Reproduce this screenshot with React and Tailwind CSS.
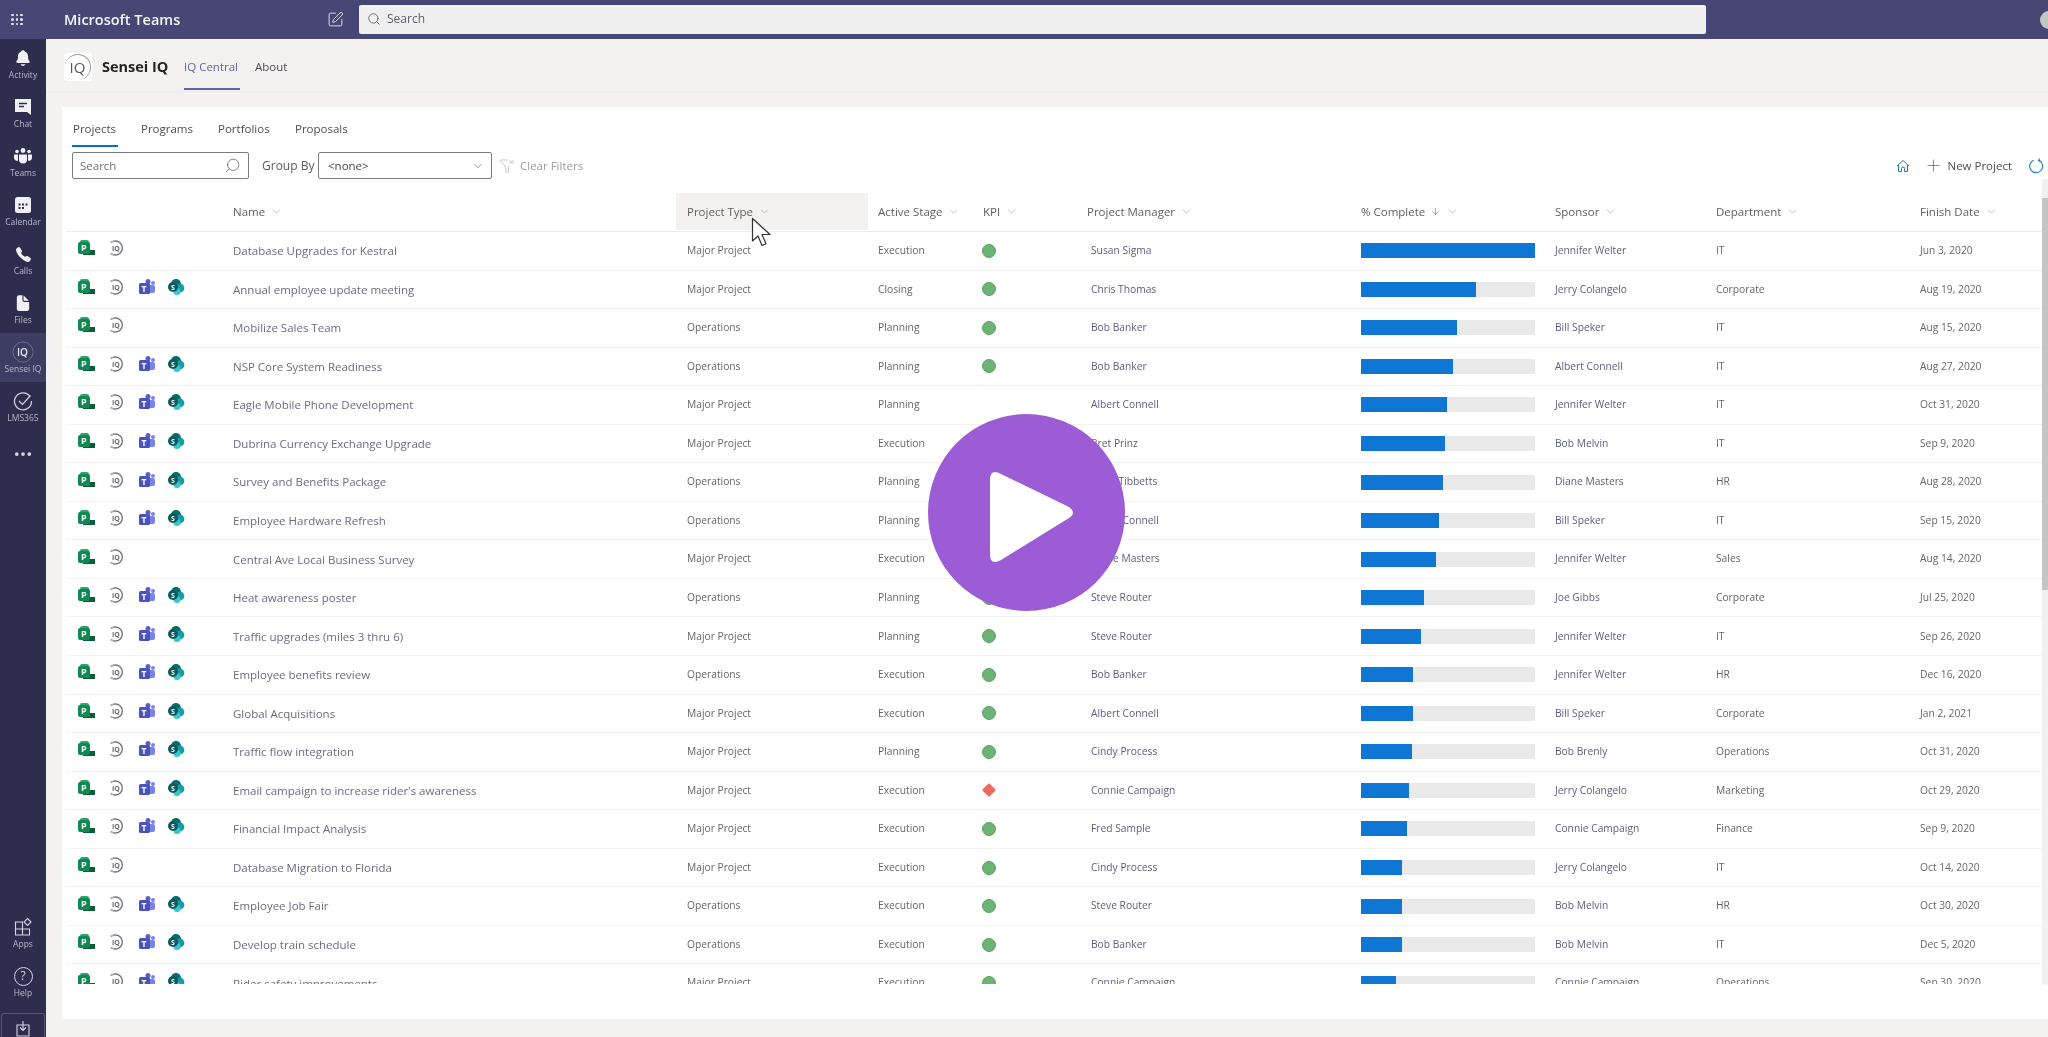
import { Search, ChevronDown, Plus, SquarePen, FilterX, ArrowDown } from "lucide-react";
import { IoNotifications, IoCall, IoDocument, IoEllipsisHorizontal } from "react-icons/io5";

const COLS = "grid grid-cols-[159px_454px_191px_105px_104px_274px_194px_161px_204px_130px]";

const ROWS = [
  ["Database Upgrades for Kestral", "Major Project", "Execution", "g", "Susan Sigma", 133, "Jennifer Welter", "IT", "Jun 3, 2020", false],
  ["Annual employee update meeting", "Major Project", "Closing", "g", "Chris Thomas", 88, "Jerry Colangelo", "Corporate", "Aug 19, 2020", true],
  ["Mobilize Sales Team", "Operations", "Planning", "g", "Bob Banker", 73, "Bill Speker", "IT", "Aug 15, 2020", false],
  ["NSP Core System Readiness", "Operations", "Planning", "g", "Bob Banker", 70, "Albert Connell", "IT", "Aug 27, 2020", true],
  ["Eagle Mobile Phone Development", "Major Project", "Planning", "", "Albert Connell", 66, "Jennifer Welter", "IT", "Oct 31, 2020", true],
  ["Dubrina Currency Exchange Upgrade", "Major Project", "Execution", "g", "Bret Prinz", 64, "Bob Melvin", "IT", "Sep 9, 2020", true],
  ["Survey and Benefits Package", "Operations", "Planning", "g", "Terry Tibbetts", 63, "Diane Masters", "HR", "Aug 28, 2020", true],
  ["Employee Hardware Refresh", "Operations", "Planning", "g", "Albert Connell", 60, "Bill Speker", "IT", "Sep 15, 2020", true],
  ["Central Ave Local Business Survey", "Major Project", "Execution", "g", "Diane Masters", 57, "Jennifer Welter", "Sales", "Aug 14, 2020", false],
  ["Heat awareness poster", "Operations", "Planning", "g", "Steve Router", 48, "Joe Gibbs", "Corporate", "Jul 25, 2020", true],
  ["Traffic upgrades (miles 3 thru 6)", "Major Project", "Planning", "g", "Steve Router", 46, "Jennifer Welter", "IT", "Sep 26, 2020", true],
  ["Employee benefits review", "Operations", "Execution", "g", "Bob Banker", 40, "Jennifer Welter", "HR", "Dec 16, 2020", true],
  ["Global Acquisitions", "Major Project", "Execution", "g", "Albert Connell", 40, "Bill Speker", "Corporate", "Jan 2, 2021", true],
  ["Traffic flow integration", "Major Project", "Planning", "g", "Cindy Process", 39, "Bob Brenly", "Operations", "Oct 31, 2020", true],
  ["Email campaign to increase rider's awareness", "Major Project", "Execution", "r", "Connie Campaign", 37, "Jerry Colangelo", "Marketing", "Oct 29, 2020", true],
  ["Financial Impact Analysis", "Major Project", "Execution", "g", "Fred Sample", 35, "Connie Campaign", "Finance", "Sep 9, 2020", true],
  ["Database Migration to Florida", "Major Project", "Execution", "g", "Cindy Process", 31, "Jerry Colangelo", "IT", "Oct 14, 2020", false],
  ["Employee Job Fair", "Operations", "Execution", "g", "Steve Router", 31, "Bob Melvin", "HR", "Oct 30, 2020", true],
  ["Develop train schedule", "Operations", "Execution", "g", "Bob Banker", 31, "Bob Melvin", "IT", "Dec 5, 2020", true],
  ["Rider safety improvements", "Major Project", "Execution", "g", "Connie Campaign", 27, "Connie Campaign", "Operations", "Sep 30, 2020", true],
];

function ProjectIcon() {
  return (
    <svg width="18" height="18" viewBox="0 0 18 18">
      <rect x="6" y="11" width="12" height="5" fill="#0b5c3a" />
      <rect x="3" y="1" width="9" height="4" rx="2" fill="#2fa36b" />
      <rect x="1" y="3" width="12" height="12" rx="2" fill="#0f8a53" />
      <text x="4" y="12" fontSize="9" fontWeight="700" fill="#fff" fontFamily="Open Sans, sans-serif">P</text>
    </svg>
  );
}

function IqIcon() {
  return (
    <svg width="16" height="18" viewBox="0 0 16 18" fill="none">
      <path d="M3 3.5 A7 7 0 1 1 3 14.5" stroke="#77757f" strokeWidth="1.4" />
      <path d="M2 3 L6 2 M2 15 L6 16" stroke="#b5b3bb" strokeWidth="1" />
      <text x="4" y="12" fontSize="7" fontWeight="700" fill="#6a6872" fontFamily="Open Sans, sans-serif">IQ</text>
    </svg>
  );
}

function TeamsIcon() {
  return (
    <svg width="18" height="18" viewBox="0 0 18 18">
      <circle cx="10" cy="3.5" r="2.5" fill="#5b5fc7" />
      <circle cx="15" cy="5" r="2" fill="#7b83eb" />
      <rect x="10" y="7" width="7" height="8" rx="2" fill="#7b83eb" />
      <rect x="1" y="5" width="11" height="11" rx="1.5" fill="#4b53bc" />
      <text x="3.6" y="13.5" fontSize="8.5" fontWeight="700" fill="#fff" fontFamily="Open Sans, sans-serif">T</text>
    </svg>
  );
}

function SharePointIcon() {
  return (
    <svg width="18" height="18" viewBox="0 0 18 18">
      <circle cx="9" cy="6" r="5" fill="#036c70" />
      <circle cx="13" cy="10" r="4.4" fill="#1a9ba1" />
      <circle cx="10" cy="13.5" r="3.6" fill="#37c6d0" />
      <circle cx="6" cy="9" r="5" fill="#0b5a5e" />
      <text x="4" y="12" fontSize="7" fontWeight="700" fill="#fff" fontFamily="Open Sans, sans-serif">S</text>
    </svg>
  );
}

function ChatIcon() {
  return (
    <svg width="18" height="18" viewBox="0 0 18 18">
      <path d="M1 1h16v16l-4-3H1z" fill="#f1f0f5" />
      <path d="M5 5.5h8M5 8.5h5" stroke="#2f2e4f" strokeWidth="1.3" />
    </svg>
  );
}

function TeamsNavIcon() {
  return (
    <svg width="20" height="18" viewBox="0 0 20 18" fill="#f1f0f5">
      <circle cx="10" cy="3.5" r="2.4" />
      <circle cx="4" cy="4.5" r="1.8" />
      <circle cx="16" cy="4.5" r="1.8" />
      <path d="M6 7.5h8v5a4 4 0 0 1-8 0z" />
      <path d="M1 7.5h4v5l-.5 1.5C2.5 14 1 12.5 1 10.5zM15 7.5h4v3c0 2-1.5 3.5-3.5 3.5L15 12.5z" />
    </svg>
  );
}

function CalendarIcon() {
  return (
    <svg width="18" height="18" viewBox="0 0 18 18">
      <rect x="1" y="1" width="16" height="16" rx="2.5" fill="#f1f0f5" />
      <path d="M4.5 7.5h2v2h-2zM8 7.5h2v2H8zM11.5 7.5h2v2h-2zM4.5 11h2v2h-2zM8 11h2v2H8z" fill="#2f2e4f" />
    </svg>
  );
}

function CircleIq({ size = 22 }) {
  return (
    <svg width={size} height={size} viewBox="0 0 24 24" fill="none">
      <circle cx="12" cy="12" r="11" stroke="#6f6e92" strokeWidth="1" />
      <text x="5.5" y="16" fontSize="11" fontWeight="600" fill="#e8e7f0" fontFamily="Open Sans, sans-serif">IQ</text>
    </svg>
  );
}

function LmsIcon() {
  return (
    <svg width="20" height="20" viewBox="0 0 20 20" fill="none" stroke="#d6d5e2" strokeWidth="1.2">
      <path d="M17 5.5A8.5 8.5 0 1 0 18.5 10" />
      <path d="M6 10l3.5 3.5L17.5 4.5" />
    </svg>
  );
}

function AppsIcon() {
  return (
    <svg width="20" height="20" viewBox="0 0 20 20" fill="none" stroke="#d6d5e2" strokeWidth="1.1">
      <path d="M2.5 5h7v7h-7zM2.5 12h7v6h-7zM9.5 12h7v6h-7z" />
      <path d="M14.5 1.5l3.5 3.5-3.5 3.5L11 5z" />
    </svg>
  );
}

function HomeIcon() {
  return (
    <svg width="14" height="14" viewBox="0 0 14 14" fill="none" stroke="#1b7fc4" strokeWidth="1">
      <path d="M1 7l6-5.5L13 7M2.500 6v6.500h3V9.500a1.500 1.500 0 0 1 3 0v3h3V6" />
    </svg>
  );
}

function RefreshIcon() {
  return (
    <svg width="16" height="16" viewBox="0 0 16 16" fill="none" stroke="#1b7fc4" strokeWidth="1.1">
      <path d="M5.500 2.200A6.500 6.500 0 1 0 11 2.300" />
      <path d="M11.500 0.500L10.500 2.500L12.500 3.500" />
    </svg>
  );
}

function NavItem({ icon, label, active }) {
  return (
    <div className={`h-[49px] flex flex-col items-center justify-center ${active ? "bg-[#3d3c63]" : ""}`}>
      <div className="h-[22px] flex items-center justify-center text-[#f1f0f5]">{icon}</div>
      <span className="text-[8.5px] leading-[11px] text-[#b9b8cc] whitespace-nowrap">{label}</span>
    </div>
  );
}

function Sidebar() {
  return (
    <aside className="w-[46px] shrink-0 bg-[#2e2d4d] flex flex-col overflow-hidden">
      <NavItem icon={<IoNotifications size={18} />} label="Activity" />
      <NavItem icon={<ChatIcon />} label="Chat" />
      <NavItem icon={<TeamsNavIcon />} label="Teams" />
      <NavItem icon={<CalendarIcon />} label="Calendar" />
      <NavItem icon={<IoCall size={17} />} label="Calls" />
      <NavItem icon={<IoDocument size={18} />} label="Files" />
      <NavItem icon={<CircleIq />} label="Sensei IQ" active />
      <NavItem icon={<LmsIcon />} label="LMS365" />
      <div className="h-[34px] mt-[6px] flex items-center justify-center text-[#d6d5e2]">
        <IoEllipsisHorizontal size={20} />
      </div>
      <div className="mt-auto flex flex-col">
        <NavItem icon={<AppsIcon />} label="Apps" />
        <NavItem
          icon={
            <span className="w-[19px] h-[19px] rounded-full border border-[#d6d5e2] flex items-center justify-center text-[12px] text-[#d6d5e2]">?</span>
          }
          label="Help"
        />
        <div className="h-[24px] mt-[7px] mx-[1px] border border-b-0 border-[#55547a] rounded-t-[3px] flex justify-center pt-[6px]">
          <svg width="16" height="18" viewBox="0 0 16 18" fill="none" stroke="#d6d5e2" strokeWidth="1.1">
            <path d="M2 5h12v11H2zM8 1v9M5 7.5L8 10.5L11 7.5" />
          </svg>
        </div>
      </div>
    </aside>
  );
}

function TopBar() {
  return (
    <header className="h-[39px] shrink-0 bg-[#464775] flex items-center">
      <div className="w-[64px] flex justify-center pr-[30px] shrink-0">
        <div className="grid grid-cols-3 gap-[2px]">
          {[0, 1, 2, 3, 4, 5, 6, 7, 8].map((i) => (
            <span key={i} className="w-[2.5px] h-[2.5px] rounded-full bg-[#e6e5f0]" />
          ))}
        </div>
      </div>
      <span className="w-[263px] text-[14.5px] font-semibold text-[#f5f5fa] shrink-0">Microsoft Teams</span>
      <SquarePen size={17} strokeWidth={1.4} className="text-[#dcdbe8] shrink-0" />
      <div className="ml-[15px] w-[1347px] h-[29px] bg-[#f0f0f0] rounded-[2px] flex items-center pl-[8px] gap-[6px] text-[#5f5f68] text-[12px] shrink-0 mt-[-1px]">
        <Search size={14} strokeWidth={1.5} />
        Search
      </div>
      <span className="ml-auto mr-[-10px] w-[18px] h-[18px] rounded-full bg-[#c5c6c4] shrink-0" />
    </header>
  );
}

function AppHeader() {
  return (
    <div className="h-[53px] shrink-0 flex items-center pl-[18px] pt-[3px] border-b border-[#ebeae9]">
      <div className="w-[28px] h-[28px] bg-white flex items-center justify-center rounded-[3px] shrink-0">
        <span className="w-[26px] h-[26px] rounded-full border-r border-t border-[#9a9a9a] flex items-center justify-center text-[15px] text-[#55555f]">IQ</span>
      </div>
      <span className="ml-[10px] text-[14.5px] font-bold text-[#242424] w-[82px]">Sensei IQ</span>
      <div className="h-full relative flex items-center text-[11.5px] text-[#6264a7] w-[56px]">
        IQ Central
        <span className="absolute left-0 right-0 bottom-[1px] h-[2px] bg-[#6264a7]" />
      </div>
      <span className="ml-[15px] text-[11.5px] text-[#4a4a55]">About</span>
    </div>
  );
}

function Tabs() {
  const tabs = [
    ["Projects", "w-[68px]"],
    ["Programs", "w-[77px]"],
    ["Portfolios", "w-[77px]"],
    ["Proposals", "w-[70px]"],
  ];
  return (
    <div className="h-[40px] flex pl-[11px] shrink-0">
      {tabs.map(([t, w], i) => (
        <div key={t} className={`${w} relative pt-[14px] text-[11.5px] leading-[16px] text-[#4f4f4f]`}>
          {t}
          {i === 0 && <span className="absolute left-[-1px] w-[46px] bottom-0 h-[2px] bg-[#0f6cbd]" />}
        </div>
      ))}
    </div>
  );
}

function Toolbar() {
  return (
    <div className="h-[27px] mt-[5px] flex items-center pl-[10px] shrink-0">
      <div className="w-[177px] h-[27px] border border-[#7c7c7c] rounded-[2px] flex items-center justify-between px-[7px] text-[11.5px] text-[#707070]">
        Search
        <Search size={17} strokeWidth={1} className="-scale-x-100 text-[#555]" />
      </div>
      <span className="ml-[13px] w-[56px] text-[12px] font-medium text-[#5a5a5a] whitespace-nowrap">Group By</span>
      <div className="w-[174px] h-[27px] border border-[#7c7c7c] rounded-[2px] flex items-center justify-between pl-[9px] pr-[6px] text-[11.5px] text-[#444]">
        {"<none>"}
        <ChevronDown size={14} strokeWidth={1.1} className="text-[#666]" />
      </div>
      <FilterX size={16} strokeWidth={1} className="ml-[7px] text-[#a9a9a9]" />
      <span className="ml-[5px] text-[11.5px] text-[#9a9a9a]">Clear Filters</span>
      <div className="ml-auto flex items-center pr-[4px]">
        <HomeIcon />
        <Plus size={19} strokeWidth={1} className="ml-[14px] text-[#1b7fc4]" />
        <span className="ml-[4px] text-[11.5px] text-[#4f4f4f] whitespace-nowrap">New Project</span>
        <span className="ml-[16px] flex"><RefreshIcon /></span>
      </div>
    </div>
  );
}

function HeadCell({ children, hover, sort }) {
  return (
    <div className={`h-[37px] flex items-center gap-[5px] text-[11.5px] font-medium text-[#5f5f5f] whitespace-nowrap ${hover ? "bg-[#f3f2f1] mr-[2px] ml-[-3px] pl-[11px]" : "pl-[8px]"}`}>
      {children}
      {sort && <ArrowDown size={11} strokeWidth={1.2} />}
      <ChevronDown size={13} strokeWidth={1} className="text-[#8f8f8f]" />
    </div>
  );
}

function TableHead() {
  return (
    <div className={`${COLS} ml-[4px] mt-[14px] h-[39px] border-b border-[#edebe9] shrink-0`}>
      <div />
      <HeadCell>Name</HeadCell>
      <HeadCell hover>Project Type</HeadCell>
      <HeadCell>Active Stage</HeadCell>
      <HeadCell>KPI</HeadCell>
      <HeadCell>Project Manager</HeadCell>
      <HeadCell sort>% Complete</HeadCell>
      <HeadCell>Sponsor</HeadCell>
      <HeadCell>Department</HeadCell>
      <HeadCell>Finish Date</HeadCell>
    </div>
  );
}

function Row({ row }) {
  const [name, type, stage, kpi, pm, pct, sponsor, dept, finish, linked] = row;
  return (
    <div className={`${COLS} h-[38.56px] items-center border-b border-[#f3f2f1] text-[10.25px] text-[#666]`}>
      <div className="flex items-center pl-[11px] pb-[5px]">
        <ProjectIcon />
        <span className="ml-[13px] flex"><IqIcon /></span>
        {linked && (
          <>
            <span className="ml-[14px] flex"><TeamsIcon /></span>
            <span className="ml-[11px] flex"><SharePointIcon /></span>
          </>
        )}
      </div>
      <div className="pl-[8px] text-[11.5px] text-[#6b6b85] whitespace-nowrap">{name}</div>
      <div className="pl-[8px]">{type}</div>
      <div className="pl-[8px]">{stage}</div>
      <div className="pl-[7px] flex items-center">
        {kpi === "g" && <span className="w-[14px] h-[14px] rounded-full bg-[#6cb473] border border-[#5ea265]" />}
        {kpi === "r" && <span className="w-[10px] h-[10px] ml-[2px] rotate-45 rounded-[1px] bg-[#ec6a5e]" />}
      </div>
      <div className="pl-[12px] text-[#5d5d80]">{pm}</div>
      <div className="pl-[8px]">
        <div className="w-[174px] h-[15px] bg-[#e9e9e9]">
          {/* pct is the bar width in px at the reference's shrunk scale */}
          <div className="h-full bg-[#0f76d3]" style={{ width: `${(pct / 133) * 100}%` }} />
        </div>
      </div>
      <div className="pl-[8px] text-[#5d5d80]">{sponsor}</div>
      <div className="pl-[8px]">{dept}</div>
      <div className="pl-[8px]">{finish}</div>
    </div>
  );
}

function Card() {
  return (
    <section className="relative flex-1 min-h-0 bg-white ml-[16px] mt-[15px] mb-[18px] flex flex-col">
      <Tabs />
      <Toolbar />
      <TableHead />
      <div className="h-[752px] ml-[4px] overflow-hidden">
        {ROWS.map((r) => (
          <Row key={r[0]} row={r} />
        ))}
      </div>
      {/* scrollbar */}
      <div className="absolute right-0 top-[72px] bottom-[34px] w-[6px] bg-[#f1f1f1]">
        <div className="mt-[19px] h-[392px] bg-[#c4c4c4]" />
      </div>
    </section>
  );
}

function PlayButton() {
  return (
    <div className="absolute left-[928px] top-[414px] w-[197px] h-[197px] rounded-full bg-[#9b5cd6] flex items-center justify-center">
      <svg width="197" height="197" viewBox="0 0 197 197">
        <path d="M62 66 Q62 54 73 60 L141 93 Q149 99 141 104 L73 146 Q62 152 62 140 Z" fill="#fff" />
      </svg>
    </div>
  );
}

function Cursor() {
  return (
    <svg className="absolute left-[751px] top-[217px]" width="22" height="32" viewBox="0 0 22 32">
      <path d="M1.5 1.5V24l5.5-5 4 9.5 4-1.8-4-9.2h8z" fill="#fff" stroke="#333" strokeWidth="1.2" strokeLinejoin="round" />
    </svg>
  );
}

export default function App() {
  return (
    <div className="relative w-screen h-screen overflow-hidden flex flex-col bg-[#f3f2f1] blur-[0.4px] font-['Open_Sans','Noto_Sans',sans-serif]">
      <TopBar />
      <div className="flex-1 min-h-0 flex">
        <Sidebar />
        <main className="flex-1 min-w-0 flex flex-col">
          <AppHeader />
          <Card />
        </main>
      </div>
      <Cursor />
      <PlayButton />
    </div>
  );
}
